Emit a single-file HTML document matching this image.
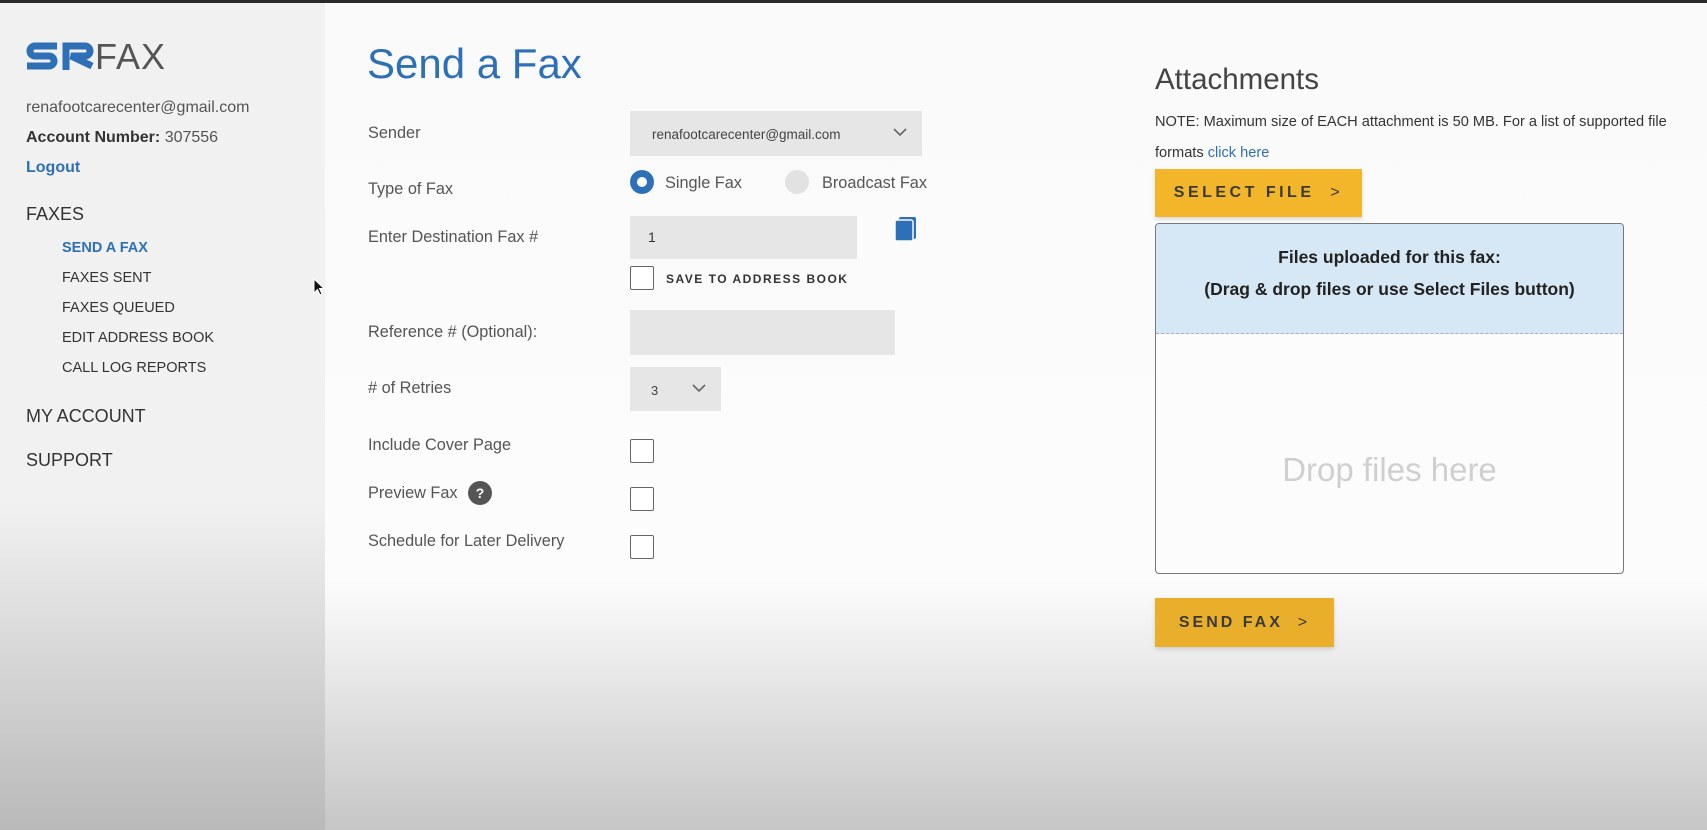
<!DOCTYPE html>
<html><head><meta charset="utf-8"><style>
*{margin:0;padding:0;box-sizing:border-box}
body{width:1707px;height:830px;overflow:hidden;font-family:"Liberation Sans",sans-serif;position:relative;background:linear-gradient(#fafafa 0,#fcfcfc 580px,#c6c6c6 830px);color:#444}
.topbar{position:absolute;left:0;top:0;width:1707px;height:3px;background:#2a2a2a}
.side{position:absolute;left:0;top:3px;width:325px;height:827px;background:linear-gradient(#f1f1f1 0,#f1f1f1 500px,#b9b9b9 827px)}
.a{position:absolute;white-space:nowrap}
.lbl{font-size:16.3px;color:#555}
.nav{font-size:14.5px;color:#333;left:62px}
.box{position:absolute;background:#e6e6e6}
.cb{position:absolute;width:24px;height:24px;border:1.5px solid #666;background:#fff;border-radius:2px}
.btn{position:absolute;background:#f3b62b;color:#3a3a3a;font-weight:bold;letter-spacing:3px;font-size:16px;display:flex;align-items:center;justify-content:center;box-shadow:0 2px 4px rgba(0,0,0,.15)}
</style></head><body>
<div class="topbar"></div>
<div class="side"></div>
<svg class="a" style="left:26px;top:41px" width="70" height="30" viewBox="0 0 70 30">
<path d="M31 5 H9 a5 5 0 0 0 0 10 H23 a5 5 0 0 1 0 10 H1" fill="none" stroke="#2d70b7" stroke-width="7"/>
<path d="M40 29 V5 H59 a5 5 0 0 1 0 10 H45 L66 25" fill="none" stroke="#2d70b7" stroke-width="7"/>
</svg>
<div class="a" style="left:95px;top:36px;font-size:36px;color:#555;letter-spacing:1px">FAX</div>
<div class="a" style="left:26px;top:99px;font-size:16px;color:#555">renafootcarecenter@gmail.com</div>
<div class="a" style="left:26px;top:129px;font-size:16px;color:#333"><b style="font-weight:600">Account Number:</b> <span style="color:#555">307556</span></div>
<div class="a" style="left:26px;top:159px;font-size:16px;color:#2d70b7;font-weight:600">Logout</div>
<div class="a" style="left:26px;top:204px;font-size:18px;color:#333">FAXES</div>
<div class="a nav" style="top:240px;color:#2d70b7;font-weight:bold">SEND A FAX</div>
<div class="a nav" style="top:270px">FAXES SENT</div>
<div class="a nav" style="top:300px">FAXES QUEUED</div>
<div class="a nav" style="top:330px">EDIT ADDRESS BOOK</div>
<div class="a nav" style="top:360px">CALL LOG REPORTS</div>
<div class="a" style="left:26px;top:406px;font-size:18px;color:#333">MY ACCOUNT</div>
<div class="a" style="left:26px;top:450px;font-size:18px;color:#333">SUPPORT</div>
<svg class="a" style="left:313px;top:278px" width="12" height="18" viewBox="0 0 12 18"><path d="M1 1 V15 L4.5 11.5 L7 17 L9 16 L6.5 10.5 H11 Z" fill="#111" stroke="#fff" stroke-width="1"/></svg>

<div class="a" style="left:367px;top:40px;font-size:42px;color:#2d70b7">Send a Fax</div>
<div class="a lbl" style="left:368px;top:124px">Sender</div>
<div class="a lbl" style="left:368px;top:180px">Type of Fax</div>
<div class="a lbl" style="left:368px;top:228px">Enter Destination Fax #</div>
<div class="a lbl" style="left:368px;top:323px">Reference # (Optional):</div>
<div class="a lbl" style="left:368px;top:379px"># of Retries</div>
<div class="a lbl" style="left:368px;top:436px">Include Cover Page</div>
<div class="a lbl" style="left:368px;top:484px">Preview Fax</div>
<div class="a" style="left:468px;top:481px;width:24px;height:24px;border-radius:50%;background:#555;color:#fff;font-size:14px;font-weight:bold;text-align:center;line-height:24px">?</div>
<div class="a lbl" style="left:368px;top:532px">Schedule for Later Delivery</div>

<div class="box" style="left:630px;top:111px;width:292px;height:45px"></div>
<div class="a" style="left:652px;top:127px;font-size:13.5px;color:#444">renafootcarecenter@gmail.com</div>
<svg class="a" style="left:893px;top:127px" width="14" height="10"><path d="M1 2 L7 8 L13 2" fill="none" stroke="#666" stroke-width="1.6"/></svg>

<div class="a" style="left:630px;top:170px;width:24px;height:24px;border-radius:50%;background:#2d70b7"></div>
<div class="a" style="left:637px;top:177px;width:10px;height:10px;border-radius:50%;background:#fff"></div>
<div class="a" style="left:665px;top:174px;font-size:16.3px;color:#555">Single Fax</div>
<div class="a" style="left:785px;top:170px;width:24px;height:24px;border-radius:50%;background:#e2e2e2"></div>
<div class="a" style="left:822px;top:174px;font-size:16.3px;color:#555">Broadcast Fax</div>

<div class="box" style="left:630px;top:216px;width:227px;height:43px"></div>
<div class="a" style="left:648px;top:229px;font-size:14px;color:#333">1</div>
<svg class="a" style="left:894px;top:216px" width="24" height="26" viewBox="0 0 24 26"><rect x="5" y="1" width="17" height="22" rx="2" fill="#2d70b7"/><rect x="1" y="4" width="18" height="21" rx="2" fill="#2d70b7" stroke="#fafafa" stroke-width="1.5"/></svg>
<div class="cb" style="left:630px;top:266px"></div>
<div class="a" style="left:666px;top:272px;font-size:12px;font-weight:bold;letter-spacing:1.5px;color:#333">SAVE TO ADDRESS BOOK</div>

<div class="box" style="left:630px;top:310px;width:265px;height:45px"></div>
<div class="box" style="left:630px;top:367px;width:91px;height:44px"></div>
<div class="a" style="left:651px;top:383px;font-size:13px;color:#444">3</div>
<svg class="a" style="left:692px;top:383px" width="14" height="10"><path d="M1 2 L7 8 L13 2" fill="none" stroke="#666" stroke-width="1.6"/></svg>

<div class="cb" style="left:630px;top:439px"></div>
<div class="cb" style="left:630px;top:487px"></div>
<div class="cb" style="left:630px;top:535px"></div>

<div class="a" style="left:1155px;top:63px;font-size:29.5px;color:#444">Attachments</div>
<div class="a" style="left:1155px;top:114px;font-size:14.6px;color:#333">NOTE: Maximum size of EACH attachment is 50 MB. For a list of supported file</div>
<div class="a" style="left:1155px;top:145px;font-size:14.6px;color:#333">formats <span style="color:#2d70b7">click here</span></div>
<div class="btn" style="left:1155px;top:169px;width:207px;height:48px;letter-spacing:3.5px">SELECT FILE&nbsp;&nbsp;<span style="font-weight:normal">&gt;</span></div>
<div class="a" style="left:1155px;top:223px;width:469px;height:351px;border:1.5px solid #777;border-radius:4px;background:#fcfcfc;overflow:hidden">
 <div style="height:110px;background:#d6e8f5;border-bottom:1.5px dashed #aac;text-align:center;color:#222;font-size:17.5px;font-weight:600;padding-top:17px;line-height:32px">Files uploaded for this fax:<br>(Drag &amp; drop files or use Select Files button)</div>
 <div style="text-align:center;font-size:33px;color:#cfcfcf;margin-top:117px">Drop files here</div>
</div>
<div class="btn" style="left:1155px;top:598px;width:179px;height:49px;background:#e9af2a">SEND FAX&nbsp;&nbsp;<span style="font-weight:normal">&gt;</span></div>
</body></html>
